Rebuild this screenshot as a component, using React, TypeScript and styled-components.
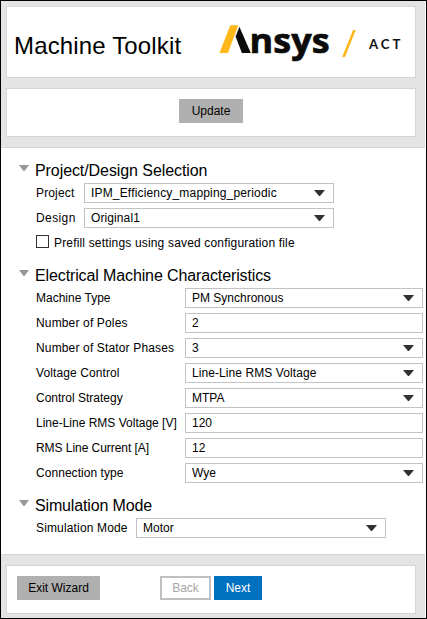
import React from "react";
import styled, { createGlobalStyle } from "styled-components";

const GlobalStyle = createGlobalStyle`
  * { box-sizing: border-box; }
  body { margin: 0; background: #fff; }
`;

const Window = styled.main`
  display: flex;
  flex-direction: column;
  width: 427px;
  height: 619px;
  border: 1px solid #000;
  padding-right: 1px;
  background: #fff;
  color: #000;
  font: 12px/14px "Liberation Sans", Arial, sans-serif;
  overflow: hidden;
  white-space: nowrap;
`;

const TopBand = styled.header`
  display: flex;
  flex-direction: column;
  gap: 10px;
  height: 147px;
  padding: 5px 9px 0 5px;
  background: #e4e4e4;
  border-bottom: 1px solid #d6d6d6;
`;

const BottomBand = styled.footer`
  flex: 1;
  padding: 10px 9px 0 5px;
  background: #e4e4e4;
  border-top: 1px solid #d6d6d6;
`;

const Card = styled.div<{ $height: number }>`
  display: flex;
  height: ${(p) => p.$height}px;
  background: #fff;
  border: 1px solid #d6d6d6;
`;

const BrandCard = styled(Card)`
  justify-content: space-between;
  padding-left: 7px;
`;

const UpdateCard = styled(Card)`
  justify-content: center;
  padding: 10px 0 0;
`;

const FooterCard = styled(Card)`
  padding: 10px 0 0 10px;
`;

const Title = styled.h1<{ $spacing: number }>`
  margin: 24px 0 0;
  font-size: 24px;
  line-height: 30px;
  font-weight: 400;
  letter-spacing: ${(p) => p.$spacing}px;
`;

const Logo = styled.svg`
  display: block;
  width: 198px;
  height: 70px;
`;

const Button = styled.button<{ $width: number; $kind?: "primary" | "outline" }>`
  width: ${(p) => p.$width}px;
  height: 24px;
  padding: 0;
  border: ${(p) => (p.$kind === "outline" ? "2px solid #c0c0c0" : "0")};
  background: ${(p) =>
    p.$kind === "primary" ? "#0070c0" : p.$kind === "outline" ? "#fff" : "#b0b0b0"};
  color: ${(p) =>
    p.$kind === "primary" ? "#fff" : p.$kind === "outline" ? "#a6a6a6" : "#000"};
  font: inherit;
`;

const StepButtons = styled.div`
  display: flex;
  gap: 3px;
  margin-left: 60px;
`;

const Body = styled.div`
  display: flex;
  flex-direction: column;
  height: 406px;
  padding: 13px 1px 0 18px;
`;

const Section = styled.section<{ $height: number }>`
  height: ${(p) => p.$height}px;
`;

const SectionHeader = styled.h2<{ $spacing: number }>`
  display: flex;
  height: 22px;
  margin: 0;
  gap: 6px;
  font-size: 16px;
  line-height: 20px;
  font-weight: 400;
  letter-spacing: ${(p) => p.$spacing}px;
`;

const Disclosure = styled.svg`
  width: 10px;
  height: 6px;
  margin-top: 4px;
  fill: #96989b;
`;

const Rows = styled.div`
  display: grid;
  gap: 5px;
  padding-left: 17px;
`;

const Row = styled.div<{ $label: number; $field: number }>`
  display: grid;
  grid-template-columns: ${(p) => p.$label}px ${(p) => p.$field}px;
  height: 20px;
`;

const Label = styled.label<{ $spacing: number }>`
  line-height: 21px;
  letter-spacing: ${(p) => p.$spacing}px;
`;

const Field = styled.div`
  display: flex;
  justify-content: space-between;
  height: 20px;
  padding: 0 8px 0 6px;
  border: 1px solid #c3c3c3;
  background: #fff;
  line-height: 19px;
`;

const Value = styled.span<{ $spacing: number }>`
  letter-spacing: ${(p) => p.$spacing}px;
`;

const Caret = styled.svg`
  width: 11px;
  height: 6px;
  margin-top: 6px;
  fill: #303236;
`;

const CheckRow = styled.label<{ $spacing: number }>`
  display: flex;
  gap: 5px;
  height: 20px;
  line-height: 21px;
  letter-spacing: ${(p) => p.$spacing}px;
`;

const CheckBox = styled.span`
  width: 13px;
  height: 13px;
  margin-top: 2px;
  border: 1px solid #333;
  background: #fff;
`;

type RowData = {
  label: string;
  value: string;
  input?: boolean;
  labelSpacing?: number;
  valueSpacing?: number;
};

const projectRows: RowData[] = [
  { label: "Project", value: "IPM_Efficiency_mapping_periodic", labelSpacing: 0.15, valueSpacing: 0.17 },
  { label: "Design", value: "Original1", labelSpacing: 0.4, valueSpacing: 0.1 },
];

const machineRows: RowData[] = [
  { label: "Machine Type", value: "PM Synchronous" },
  { label: "Number of Poles", value: "2", input: true, labelSpacing: 0.15 },
  { label: "Number of Stator Phases", value: "3", labelSpacing: 0.15 },
  { label: "Voltage Control", value: "Line-Line RMS Voltage", labelSpacing: 0.1, valueSpacing: 0.08 },
  { label: "Control Strategy", value: "MTPA" },
  { label: "Line-Line RMS Voltage [V]", value: "120", input: true },
  { label: "RMS Line Current [A]", value: "12", input: true, labelSpacing: -0.05 },
  { label: "Connection type", value: "Wye", labelSpacing: 0.05 },
];

const modeRows: RowData[] = [{ label: "Simulation Mode", value: "Motor", labelSpacing: 0.15 }];

function FormRows({ rows, label, field }: { rows: RowData[]; label: number; field: number }) {
  return (
    <>
      {rows.map((r) => (
        <Row key={r.label} $label={label} $field={field}>
          <Label $spacing={r.labelSpacing ?? 0}>{r.label}</Label>
          <Field>
            <Value $spacing={r.valueSpacing ?? 0}>{r.value}</Value>
            {!r.input && (
              <Caret viewBox="0 0 11 6">
                <path d="M0 0h11L6 6H5z" />
              </Caret>
            )}
          </Field>
        </Row>
      ))}
    </>
  );
}

function Heading({ text, spacing }: { text: string; spacing: number }) {
  return (
    <SectionHeader $spacing={spacing}>
      <Disclosure viewBox="0 0 10 6">
        <path d="M0 0h10L5.5 6h-1z" />
      </Disclosure>
      {text}
    </SectionHeader>
  );
}

function AnsysLogo() {
  return (
    <Logo viewBox="217 7 198 70" role="img" aria-label="Ansys ACT">
      <path fill="#ffb71b" d="M230.3 25.3h8L228 53h-8.6z" />
      <path fill="#0b0b0b" d="M239.4 26.8 250.8 53h-8.9l-6.3-16.5z" />
      <text
        x="249.6"
        y="52.6"
        fill="#0b0b0b"
        stroke="#0b0b0b"
        strokeWidth="0.7"
        fontFamily="Open Sans"
        fontWeight="700"
        fontSize="34.5"
        textLength="80"
        lengthAdjust="spacingAndGlyphs"
      >
        nsys
      </text>
      <path fill="#ffb71b" d="M353 30h2.8L345 57h-2.8z" />
      <text x="369" y="49.2" fill="#111" fontFamily="Lato" fontWeight="700" fontSize="13.2" letterSpacing="3">
        ACT
      </text>
    </Logo>
  );
}

export default function App() {
  return (
    <>
      <GlobalStyle />
      <Window>
        <TopBand>
          <BrandCard $height={72}>
            <Title $spacing={0.15}>Machine Toolkit</Title>
            <AnsysLogo />
          </BrandCard>
          <UpdateCard $height={49}>
            <Button $width={64}>Update</Button>
          </UpdateCard>
        </TopBand>
        <Body>
          <Section $height={105}>
            <Heading text="Project/Design Selection" spacing={-0.08} />
            <Rows>
              <FormRows rows={projectRows} label={48} field={250} />
              <CheckRow $spacing={0.17}>
                <CheckBox />
                Prefill settings using saved configuration file
              </CheckRow>
            </Rows>
          </Section>
          <Section $height={230}>
            <Heading text="Electrical Machine Characteristics" spacing={-0.12} />
            <Rows>
              <FormRows rows={machineRows} label={149} field={238} />
            </Rows>
          </Section>
          <Section $height={50}>
            <Heading text="Simulation Mode" spacing={-0.15} />
            <Rows>
              <FormRows rows={modeRows} label={100} field={250} />
            </Rows>
          </Section>
        </Body>
        <BottomBand>
          <FooterCard $height={49}>
            <Button $width={83}>Exit Wizard</Button>
            <StepButtons>
              <Button $width={51} $kind="outline">Back</Button>
              <Button $width={48} $kind="primary">Next</Button>
            </StepButtons>
          </FooterCard>
        </BottomBand>
      </Window>
    </>
  );
}
